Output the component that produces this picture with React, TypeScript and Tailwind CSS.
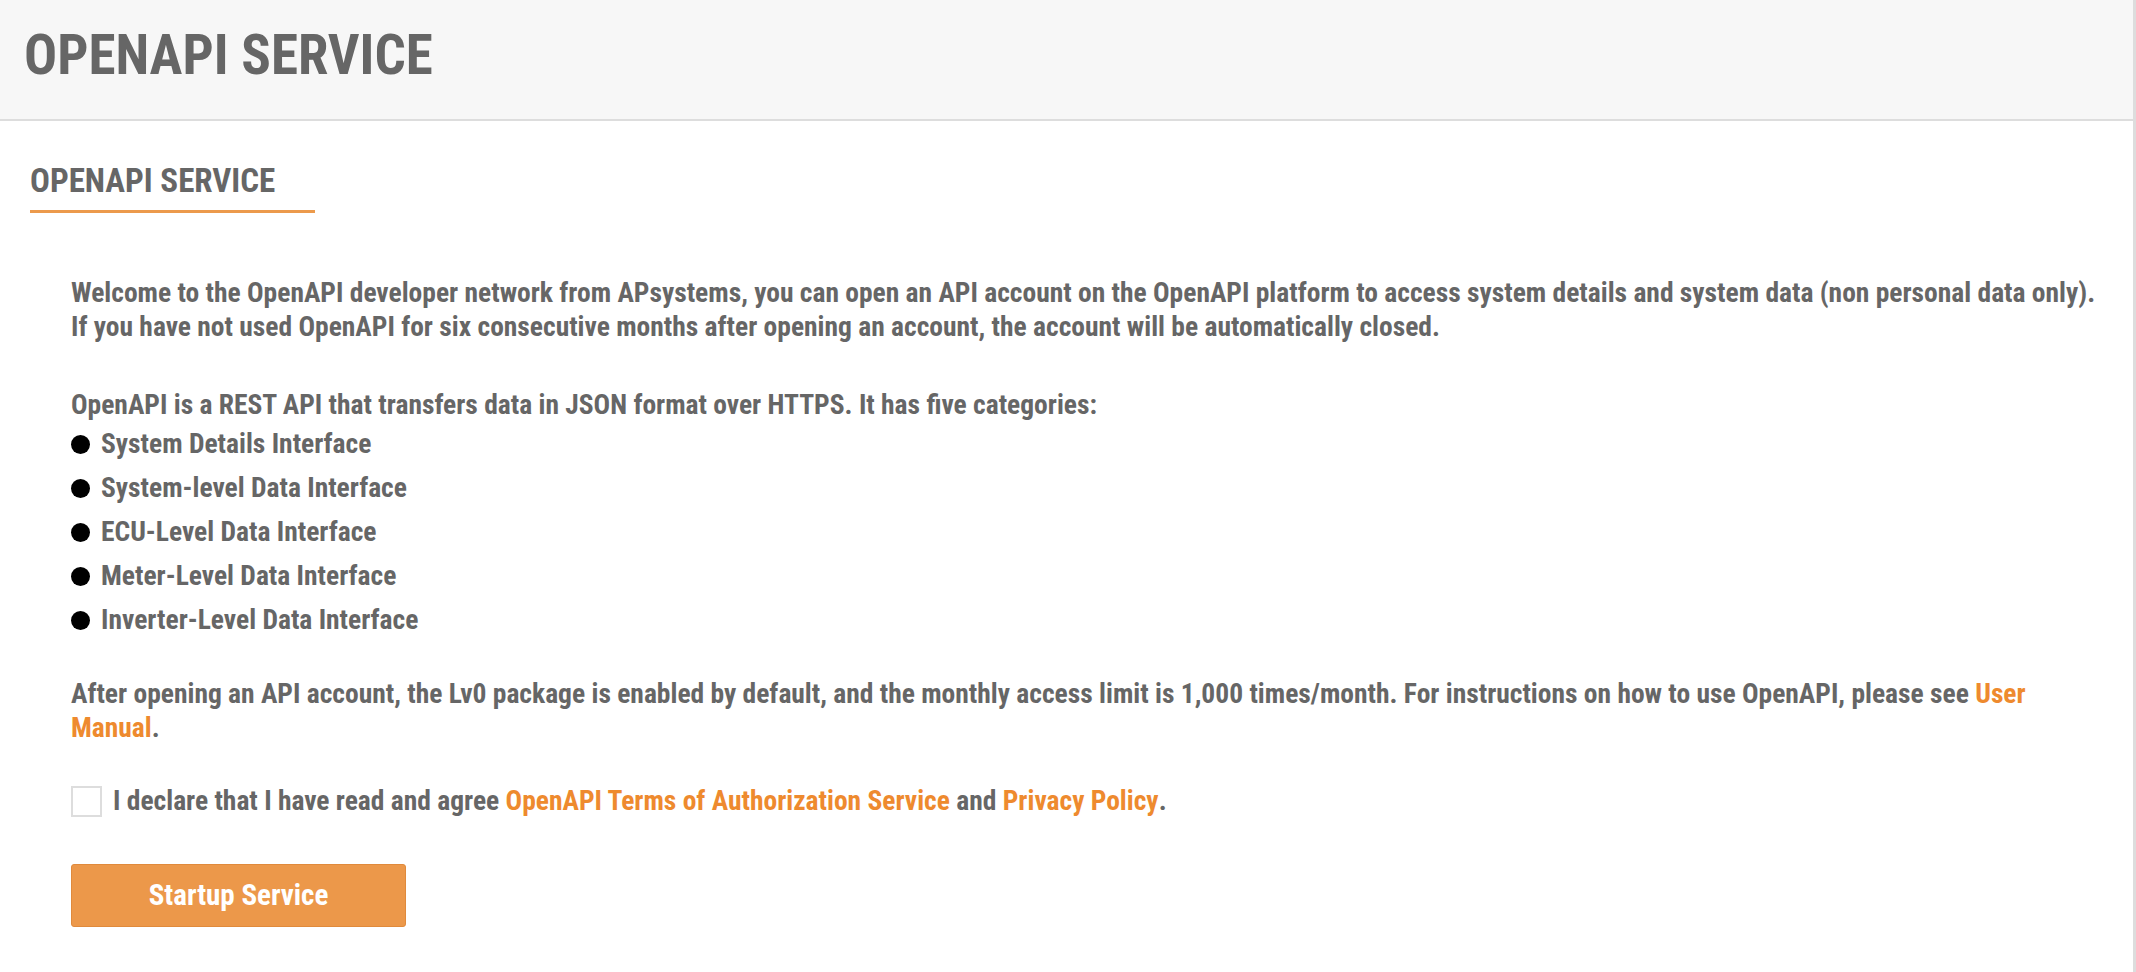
const bullets = [
  "System Details Interface",
  "System-level Data Interface",
  "ECU-Level Data Interface",
  "Meter-Level Data Interface",
  "Inverter-Level Data Interface",
];

const App = () => {
  return (
    <div className="min-h-screen bg-white border-r-[3px] border-[#dddddd] text-[#666666] font-bold font-['Roboto_Condensed','Roboto',sans-serif] [font-stretch:condensed]">
      <header className="h-[121px] bg-[#f7f7f7] border-b-2 border-[#dddddd] pl-6 pb-[8px] flex items-center">
        <h1 className="text-[55px] leading-none">OPENAPI SERVICE</h1>
      </header>

      <section className="pl-[30px] pr-[20px] pt-[40px]">
        <h2 className="inline-block text-[33px] leading-[40px] pr-10 pb-[9px] border-b-[3px] border-[#ec9a4c]">
          OPENAPI SERVICE
        </h2>

        <div className="pl-[41px] text-[27.5px]">
          <p className="mt-[63px] leading-[34px]">
            Welcome to the OpenAPI developer network from APsystems, you can open an API account on the OpenAPI platform to access system details and system data (non personal data only).
            <br />
            If you have not used OpenAPI for six consecutive months after opening an account, the account will be automatically closed.
          </p>

          <p className="mt-[44px] leading-[34px]">
            OpenAPI is a REST API that transfers data in JSON format over HTTPS. It has five categories:
          </p>
          <ul>
            {bullets.map((b) => (
              <li key={b} className="h-[44px] flex items-center">
                <span className="w-[19px] h-[19px] rounded-full bg-black mr-[11px]"></span>
                {b}
              </li>
            ))}
          </ul>

          <p className="mt-[35px] leading-[34px]">
            After opening an API account, the Lv0 package is enabled by default, and the monthly access limit is 1,000 times/month. For instructions on how to use OpenAPI, please see{" "}
            <a className="text-[#ee8a2e]">
              User
              <br />
              Manual
            </a>
            .
          </p>

          <label className="mt-[39px] h-[34px] flex items-center">
            <span className="w-[31px] h-[31px] border-2 border-[#dddddd] bg-white mr-[11px]"></span>
            I declare that I have read and agree&nbsp;
            <a className="text-[#ee8a2e]">OpenAPI Terms of Authorization Service</a>
            &nbsp;and&nbsp;
            <a className="text-[#ee8a2e]">Privacy Policy</a>.
          </label>

          <button className="mt-[46px] w-[335px] h-[63px] rounded-[3px] bg-[#ec984a] border border-[#e08a3c] text-white text-[29px]">
            Startup Service
          </button>
        </div>
      </section>
    </div>
  );
};

export default App;
